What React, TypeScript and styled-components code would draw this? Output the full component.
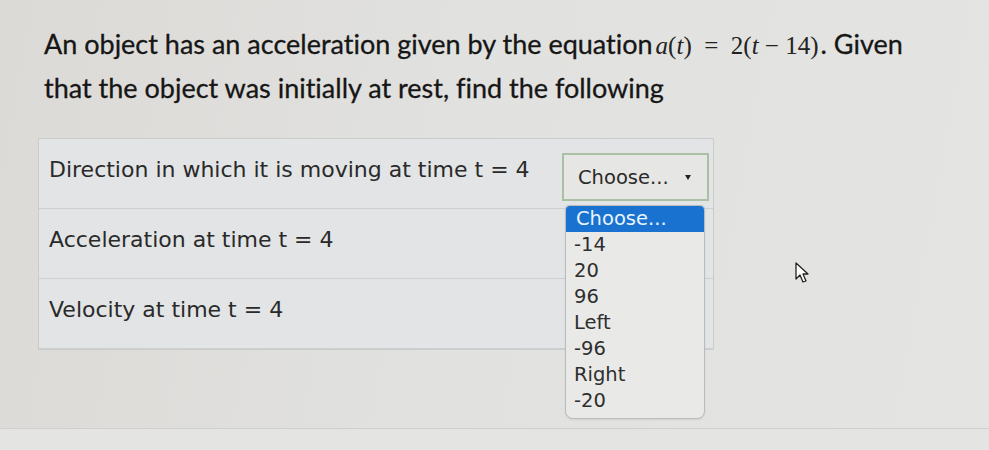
import React from "react";
import styled, { createGlobalStyle } from "styled-components";

const Global = createGlobalStyle`
  html, body { margin: 0; padding: 0; }
  body {
    width: 989px; height: 450px; overflow: hidden;
    background: linear-gradient(100deg, #dcdad7 0%, #e1e1df 45%, #e4e4e2 100%);
    font-family: "Lato", "Liberation Sans", sans-serif;
  }
`;

const Page = styled.div`
  position: relative;
  width: 989px;
  height: 450px;
  display: flex;
  flex-direction: column;
`;

const Question = styled.div`
  padding: 22px 0 0 44px;
  display: flex;
  flex-direction: column;
`;

const Line = styled.div`
  font-family: "Lato", "Liberation Sans", sans-serif;
  font-size: 27px;
  line-height: 44px;
  height: 44px;
  color: #161616;
  white-space: nowrap;
  font-variant-ligatures: none;
  -webkit-text-stroke: 0.3px #161616;
`;

const Math = styled.span`
  font-family: "Liberation Serif", serif;
  font-size: 25px;
  margin: 0 2px 0 3px;
  -webkit-text-stroke: 0;
  color: #222;
`;

const Var = styled.i`
  font-style: italic;
`;

const Table = styled.div`
  margin: 28px 0 0 38px;
  width: 674px;
  display: grid;
  grid-template-columns: 518px 1fr;
  border: 1px solid #c9cbcc;
  background: #e2e4e5;
`;

const Cell = styled.div<{ $last?: boolean }>`
  height: 70px;
  box-sizing: border-box;
  display: flex;
  align-items: center;
  padding: 0 0 8px ${(p) => (p.$last ? "0" : "10px")};
  border-bottom: 1px solid #cdd0d1;
  font-family: "DejaVu Sans", Verdana, sans-serif;
  font-size: 22px;
  color: #2a2a2a;
`;

const SelectCell = styled(Cell)`
  padding: 14px 0 0 5px;
  align-items: flex-start;
`;

const SelectBox = styled.div`
  width: 147px;
  height: 48px;
  box-sizing: border-box;
  border: 2px solid #a9c0a4;
  background: #e6e6e4;
  display: flex;
  align-items: center;
  justify-content: space-between;
  padding: 0 16px 0 14px;
  font-family: "DejaVu Sans", Verdana, sans-serif;
  font-size: 19.5px;
  color: #2a2a2a;
`;

const Caret = styled.span`
  width: 0;
  height: 0;
  border-left: 3px solid transparent;
  border-right: 3px solid transparent;
  border-top: 5px solid #222;
`;

const Menu = styled.ul`
  position: absolute;
  left: 565px;
  top: 205px;
  width: 138px;
  margin: 0;
  padding: 0 0 4px 0;
  list-style: none;
  background: #e9e9e8;
  border: 1px solid #b9bcbd;
  border-radius: 4px 4px 8px 8px;
  font-family: "DejaVu Sans", Verdana, sans-serif;
  font-size: 19.5px;
  color: #2e2e2e;
  box-shadow: 0 1px 2px rgba(0,0,0,0.08);
`;

const Option = styled.li<{ $active?: boolean }>`
  height: 26px;
  line-height: 26px;
  padding-left: ${(p) => (p.$active ? "10px" : "8px")};
  background: ${(p) => (p.$active ? "#1a72d0" : "transparent")};
  color: ${(p) => (p.$active ? "#e8f4ff" : "#2e2e2e")};
  border-radius: ${(p) => (p.$active ? "4px 4px 0 0" : "0")};
`;

const Cursor = styled.svg`
  position: absolute;
  left: 795px;
  top: 262px;
`;

const BottomEdge = styled.div`
  position: absolute;
  left: 0;
  right: 0;
  top: 428px;
  height: 22px;
  border-top: 1px solid #cfcfcd;
  background: #e4e4e2;
`;

const options = ["-14", "20", "96", "Left", "-96", "Right", "-20"];

export default function App() {
  return (
    <Page>
      <Global />
      <Question>
        <Line>
          An object has an acceleration given by the equation
          <Math>
            <Var>a</Var>(<Var>t</Var>) &nbsp;=&nbsp; 2(<Var>t</Var> − 14)
          </Math>
          . Given
        </Line>
        <Line>that the object was initially at rest, find the following</Line>
      </Question>
      <Table>
        <Cell>Direction in which it is moving at time t = 4</Cell>
        <SelectCell $last>
          <SelectBox>
            Choose...
            <Caret />
          </SelectBox>
        </SelectCell>
        <Cell>Acceleration at time t = 4</Cell>
        <Cell $last />
        <Cell>Velocity at time t = 4</Cell>
        <Cell $last />
      </Table>
      <Menu>
        <Option $active>Choose...</Option>
        {options.map((o) => (
          <Option key={o}>{o}</Option>
        ))}
      </Menu>
      <Cursor width="16" height="24" viewBox="0 0 16 24">
        <path d="M1 1 L1 17 L5 13 L8 20 L11 19 L8 12 L13 12 Z" fill="#fff" stroke="#222" strokeWidth="1.3" strokeLinejoin="round" />
      </Cursor>
      <BottomEdge />
    </Page>
  );
}
